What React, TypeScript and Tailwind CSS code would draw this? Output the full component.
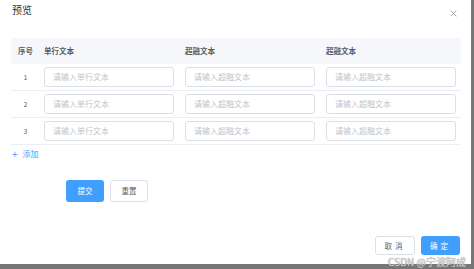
const font = { fontFamily: '"Noto Sans CJK SC", "Noto Sans", sans-serif' };

const rows = [1, 2, 3];

const Input = ({ placeholder }: { placeholder: string }) => (
  <div className="h-[20px] w-[130px] rounded-[3px] border border-[#dcdfe6] bg-white pl-[8px] flex items-center text-[8px] text-[#c0c4cc] leading-none">
    {placeholder}
  </div>
);

export default function App() {
  return (
    <div className="w-[474px] h-[269px] bg-[#777777] overflow-hidden" style={font}>
      <div className="relative w-[471px] h-[264px] bg-white flex flex-col">
        {/* Header */}
        <div className="flex items-start justify-between pl-[12px] pr-[14px] pt-[3px] h-[38px]">
          <span className="text-[10px] text-[#303133] leading-[14px]">预览</span>
          <svg width="7" height="7" viewBox="0 0 10 10" className="mt-[7px]">
            <path d="M1 1L9 9M9 1L1 9" stroke="#909399" strokeWidth="1.2" />
          </svg>
        </div>

        {/* Table */}
        <div className="mx-[11px] w-[450px]">
          <div className="grid grid-cols-[29px_141px_141px_139px] h-[26px] items-center bg-[#f5f7fa] text-[7.5px] font-bold text-[#5a5d63] leading-none">
            <div className="text-center">序号</div>
            <div className="pl-[4px]">单行文本</div>
            <div className="pl-[4px]">超融文本</div>
            <div className="pl-[4px]">超融文本</div>
          </div>
          {rows.map((r) => (
            <div
              key={r}
              className="grid grid-cols-[29px_141px_141px_139px] h-[27px] items-center border-b border-[#ebeef5]"
            >
              <div className="text-center text-[7px] text-[#606266]">{r}</div>
              <div className="pl-[4px]">
                <Input placeholder="请输入单行文本" />
              </div>
              <div className="pl-[4px]">
                <Input placeholder="请输入超融文本" />
              </div>
              <div className="pl-[4px]">
                <Input placeholder="请输入超融文本" />
              </div>
            </div>
          ))}
        </div>

        {/* Add */}
        <div className="flex items-center gap-[5px] pl-[12px] mt-[4px] h-[10px] text-[8px] text-[#409eff] leading-none">
          <span className="text-[10px]">+</span>
          <span>添加</span>
        </div>

        {/* Form buttons */}
        <div className="flex gap-[6px] pl-[66px] mt-[21px]">
          <button className="w-[38px] h-[22px] rounded-[3px] bg-[#409eff] text-white text-[7.5px]">提交</button>
          <button className="w-[38px] h-[22px] rounded-[3px] border border-[#dcdfe6] bg-white text-[#606266] text-[7.5px]">重置</button>
        </div>

        {/* Footer */}
        <div className="flex justify-end gap-[6px] pr-[11px] mt-[34px]">
          <button className="w-[40px] h-[19px] rounded-[3px] border border-[#dcdfe6] bg-white text-[#606266] text-[7.5px] tracking-[3px]">取消</button>
          <button className="w-[39px] h-[19px] rounded-[3px] bg-[#409eff] text-white text-[7.5px] tracking-[3px]">确定</button>
        </div>

        {/* Watermark */}
        <div
          className="absolute right-[5px] bottom-[-3px] text-[10px] leading-none text-[#d0d0d0]"
          style={{ textShadow: "0 0 1px #8a8a8a" }}
        >
          CSDN @宁波阿成
        </div>
      </div>
    </div>
  );
}
